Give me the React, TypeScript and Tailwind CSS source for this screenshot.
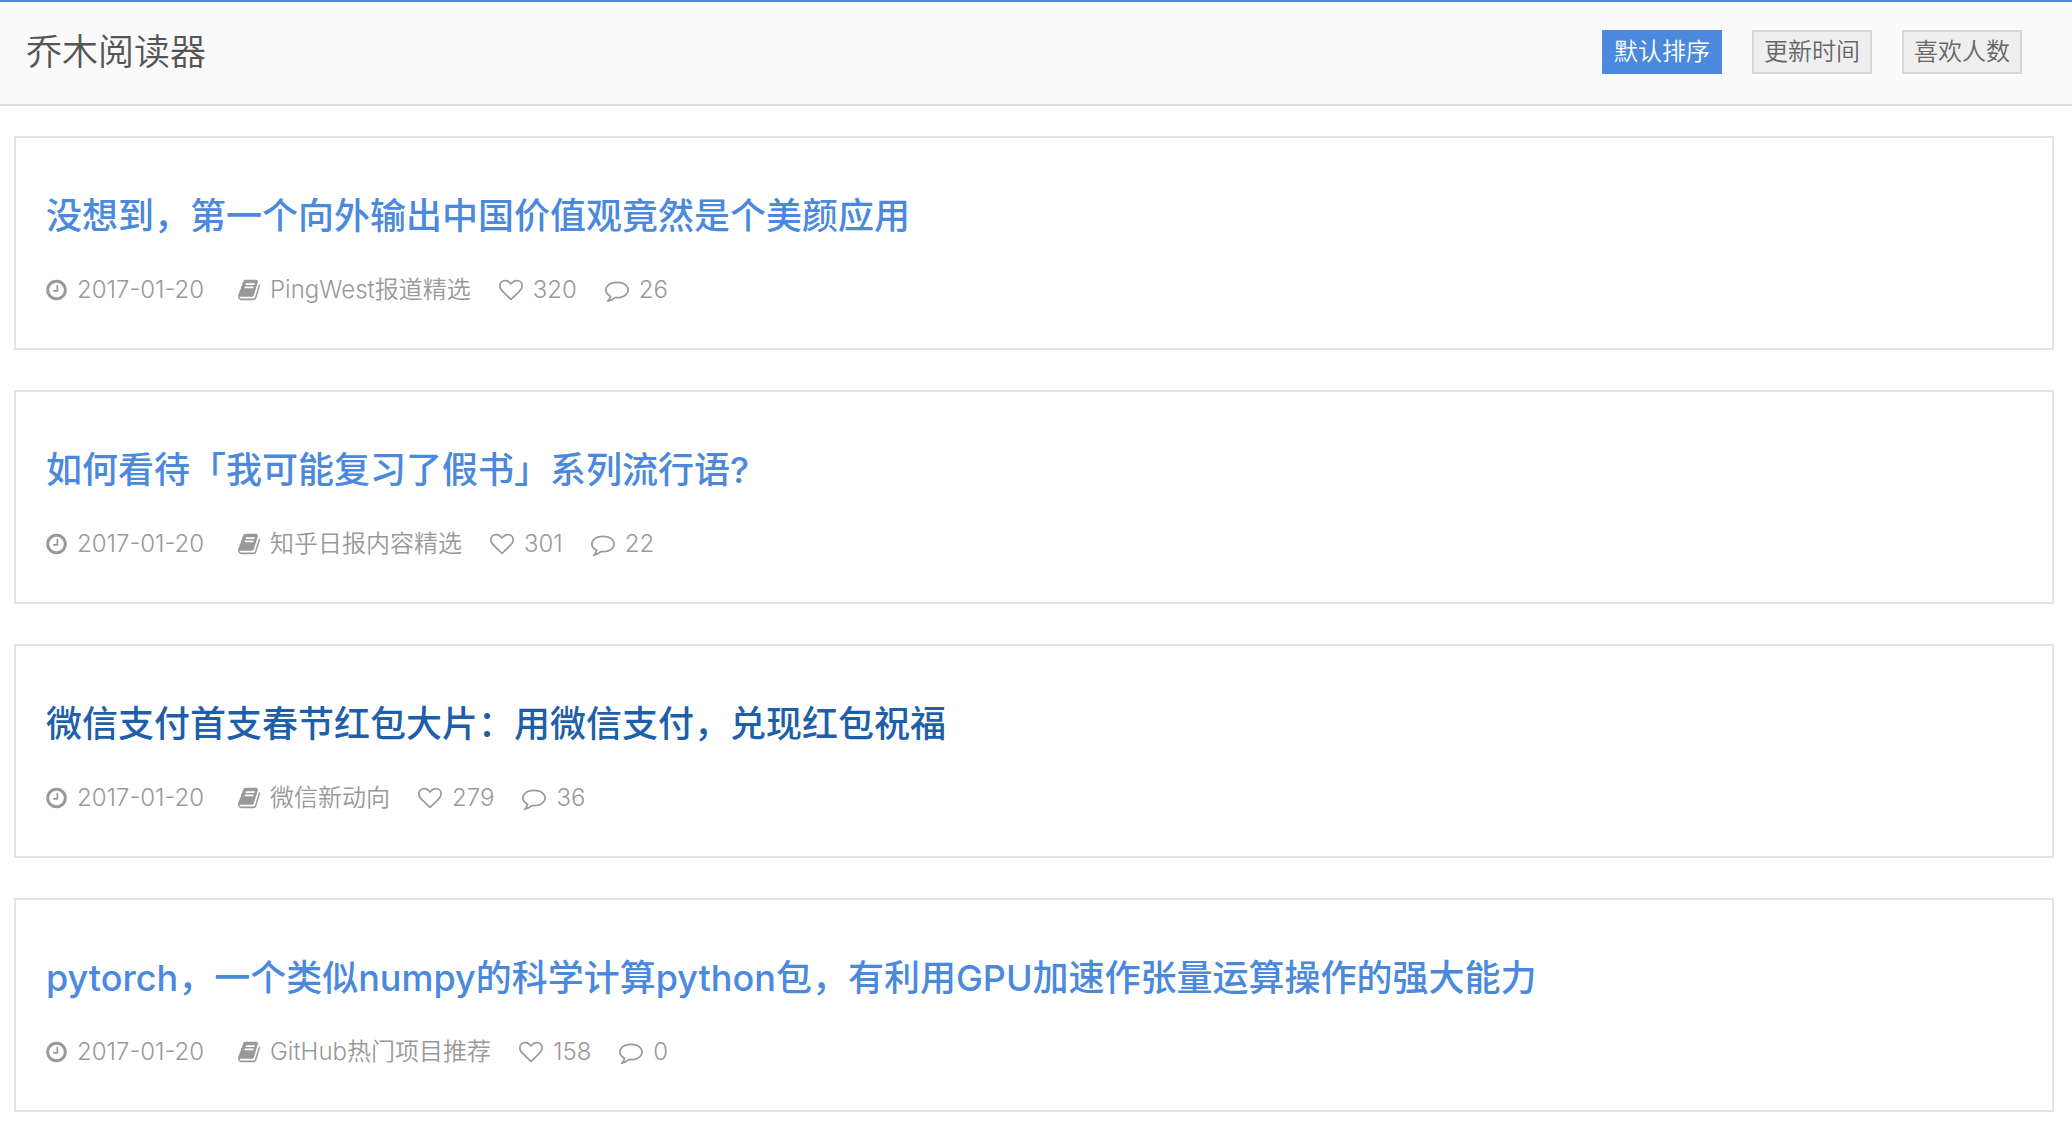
type Article = {
  title: string;
  date: string;
  source: string;
  likes: number;
  comments: number;
  active?: boolean;
};

const articles: Article[] = [
  { title: "没想到，第一个向外输出中国价值观竟然是个美颜应用", date: "2017-01-20", source: "PingWest报道精选", likes: 320, comments: 26 },
  { title: "如何看待「我可能复习了假书」系列流行语?", date: "2017-01-20", source: "知乎日报内容精选", likes: 301, comments: 22 },
  { title: "微信支付首支春节红包大片：用微信支付，兑现红包祝福", date: "2017-01-20", source: "微信新动向", likes: 279, comments: 36, active: true },
  { title: "pytorch，一个类似numpy的科学计算python包，有利用GPU加速作张量运算操作的强大能力", date: "2017-01-20", source: "GitHub热门项目推荐", likes: 158, comments: 0 },
];

const sorts = ["默认排序", "更新时间", "喜欢人数"];

function ClockIcon() {
  return (
    <svg aria-hidden="true" viewBox="0 0 1536 1792" className="h-6 w-[21px] shrink-0" fill="currentColor">
      <path d="M896 544v448q0 14-9 23t-23 9h-320q-14 0-23-9t-9-23v-64q0-14 9-23t23-9h224v-352q0-14 9-23t23-9h64q14 0 23 9t9 23zm416 352q0-148-73-273t-198-198-273-73-273 73-198 198-73 273 73 273 198 198 273 73 273-73 198-198 73-273zm224 0q0 209-103 385.500t-279.500 279.500-385.500 103-385.500-103-279.500-279.500-103-385.500 103-385.500 279.500-279.500 385.500-103 385.500 103 279.500 279.500 103 385.500z" />
    </svg>
  );
}

function BookIcon() {
  return (
    <svg aria-hidden="true" viewBox="0 0 1664 1792" className="h-6 w-[22px] shrink-0" fill="currentColor">
      <path d="M1639 478q40 57 18 129l-275 906q-19 64-76.500 107.500t-122.500 43.500h-923q-77 0-148.500-53.500t-99.500-131.500q-24-67-2-127 0-4 3-27t4-37q1-8-3-21.500t-3-19.500q2-11 8-21t16.500-23.500 16.500-23.500q23-38 45-91.500t30-91.500q3-10 .5-30t-.5-28q3-11 17-28t17-23q21-36 42-92t25-90q1-9-2.500-32t.5-28q4-13 22-30.500t22-22.500q19-26 42.500-84.500t27.500-96.500q1-8-3-25.500t-2-26.500q2-8 9-18t18-23 17-21q8-12 16.500-30.500t15-35 16-36 19.500-32 26.500-23.500 36-11.500 47.500 5.500l-1 3q38-9 51-9h761q74 0 114 56t18 130l-274 906q-36 119-71.500 153.500t-128.500 34.500h-869q-27 0-38 15-11 16-1 43 24 70 144 70h923q29 0 56-15.500t35-41.500l300-987q7-22 5-57 38 15 59 43zm-1064 2q-4 13 2 22.500t20 9.500h608q13 0 25.500-9.500t16.500-22.500l21-64q4-13-2-22.500t-20-9.500h-608q-13 0-25.500 9.500t-16.500 22.500zm-83 256q-4 13 2 22.500t20 9.500h608q13 0 25.500-9.500t16.500-22.500l21-64q4-13-2-22.500t-20-9.500h-608q-13 0-25.500 9.500t-16.500 22.500z" />
    </svg>
  );
}

function HeartIcon() {
  return (
    <svg aria-hidden="true" viewBox="0 0 1792 1792" className="size-6 shrink-0" fill="currentColor">
      <path d="M1664 596q0-81-21.500-143t-55-98.500-81.500-59.500-94-31-98-8-112 25.500-110.500 64-86.500 72-60 61.500q-18 22-49 22t-49-22q-24-28-60-61.500t-86.500-72-110.500-64-112-25.500-98 8-94 31-81.500 59.500-55 98.500-21.500 143q0 168 187 355l581 560 580-559q188-188 188-356zm128 0q0 221-229 450l-623 600q-18 18-44 18t-44-18l-624-602q-10-8-27.500-26t-55.500-65.500-68-97.500-53.500-121-23.500-138q0-220 127-344t351-124q62 0 126.500 21.500t120 58 95.500 68.500 76 68q36-36 76-68t95.500-68.500 120-58 126.500-21.500q224 0 351 124t127 344z" />
    </svg>
  );
}

function CommentIcon() {
  return (
    <svg aria-hidden="true" viewBox="0 0 1792 1792" className="size-6 shrink-0" fill="currentColor">
      <path d="M896 384q-204 0-381.500 69.500t-282 187.500-104.500 255q0 112 71.500 213.500t201.500 175.500l87 50-27 96q-24 91-70 172 152-63 275-171l43-38 57 6q69 8 130 8 204 0 381.500-69.500t282-187.500 104.500-255-104.500-255-282-187.500-381.500-69.500zm896 512q0 174-120 321.500t-326 233-450 85.500q-70 0-145-8-198 175-460 242-49 14-114 22h-5q-15 0-27-10.500t-16-27.500v-1q-3-4-.5-12t2-10 4.500-9.500l6-9 7-8.500 8-9q7-8 31-34.500t34.500-38 31-39.500 32.500-51 27-59 26-76q-157-89-247.500-220t-90.500-281q0-174 120-321.500t326-233 450-85.500 450 85.500 326 233 120 321.500z" />
    </svg>
  );
}

function ArticleCard({ article }: { article: Article }) {
  return (
    <article className="border-2 border-[#e3e3e3] px-[30px] pt-[53px] pb-[38px]">
      <h2 className="text-4xl leading-[50px] font-medium">
        <a href="#" className={article.active ? "text-[#1f5fa9]" : "text-[#4a89dc]"}>
          {article.title}
        </a>
      </h2>
      <ul className="mt-[29px] flex flex-wrap gap-x-7 text-2xl leading-10 font-[350] text-[#999]">
        <li className="flex items-center gap-2.5"><ClockIcon /><time className="min-w-[133px]">{article.date}</time></li>
        <li className="flex items-center gap-2.5"><BookIcon /><span>{article.source}</span></li>
        <li className="flex items-center gap-2.5"><HeartIcon /><span>{article.likes}</span></li>
        <li className="flex items-center gap-2.5"><CommentIcon /><span>{article.comments}</span></li>
      </ul>
    </article>
  );
}

export default function App() {
  return (
    <div className="min-h-screen bg-white font-['Inter','Noto_Sans_CJK_SC',sans-serif]" lang="zh-CN">
      <header className="flex items-center justify-between border-t-2 border-b-2 border-t-[#4a89dc] border-b-[#e0e0e0] bg-[#fafafa] pt-6 pr-[50px] pb-[26px] pl-[26px]">
        <h1 className="text-4xl leading-[52px] font-[350] text-[#555]">乔木阅读器</h1>
        <nav className="flex gap-[30px]">
          {sorts.map((label, i) => (
            <button
              key={label}
              type="button"
              className={
                i === 0
                  ? "border-2 border-[#4a89dc] bg-[#4a89dc] px-2.5 text-2xl leading-10 font-[350] text-white"
                  : "border-2 border-[#d6d6d6] bg-[#efefef] px-2.5 text-2xl leading-10 font-[350] text-[#666]"
              }
            >
              {label}
            </button>
          ))}
        </nav>
      </header>
      <main className="flex flex-col gap-10 pt-[30px] pr-[18px] pb-5 pl-3.5">
        {articles.map((article) => (
          <ArticleCard key={article.title} article={article} />
        ))}
      </main>
    </div>
  );
}
